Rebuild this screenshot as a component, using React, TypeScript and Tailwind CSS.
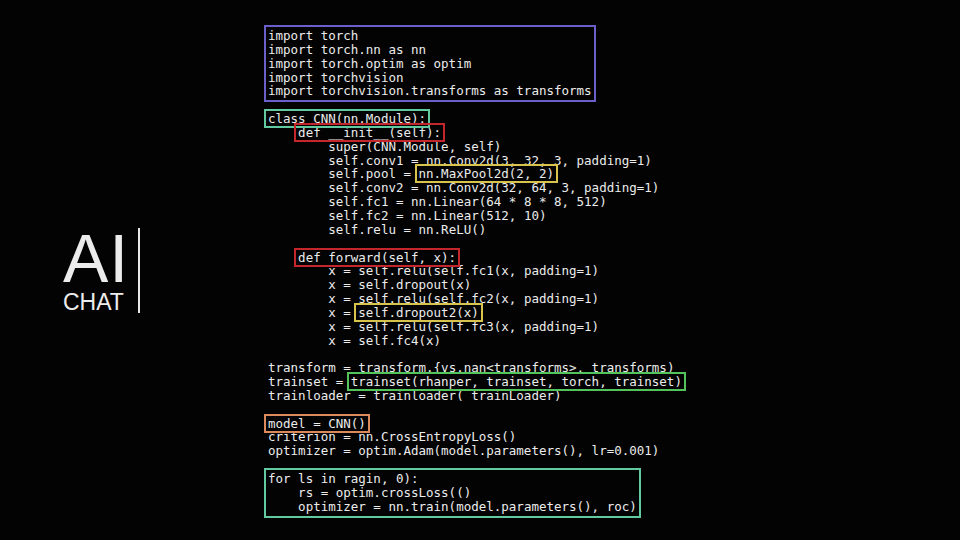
import type { ReactNode } from "react";

function Line({ indent = 0, children }: { indent?: number; children?: ReactNode }) {
  return (
    <div className="h-[13.85px] whitespace-pre">
      {" ".repeat(indent)}
      {children}
    </div>
  );
}

function Mark({ color, children }: { color: string; children: ReactNode }) {
  return (
    <span className={`-mx-[2px] px-[2px] outline-2 outline-offset-0 ${color}`}>{children}</span>
  );
}

function Blank() {
  return <div className="h-[13.85px]" />;
}

export default function App() {
  return (
    <div className="flex h-[540px] w-[960px] overflow-hidden bg-[#030303] text-[#ececec]">
      <div className="flex w-[268px] shrink-0 items-center pl-[63px]">
        <div className="flex items-stretch gap-[9px] font-['Liberation_Sans',Arial,sans-serif]">
          <div className="flex flex-col">
            <span className="text-[68px] leading-[60px] tracking-[1px]">AI</span>
            <span className="mt-[3px] text-[23px] leading-[22px]">CHAT</span>
          </div>
          <div className="w-[2px] bg-[#e8e8e8]" />
        </div>
      </div>

      <div className="pt-[29px] font-['DejaVu_Sans_Mono',monospace] text-[12.5px] leading-[13.85px]">
        <div className="w-fit outline-2 outline-offset-2 outline-[#6b5fc9]">
          <Line>import torch</Line>
          <Line>import torch.nn as nn</Line>
          <Line>import torch.optim as optim</Line>
          <Line>import torchvision</Line>
          <Line>import torchvision.transforms as transforms</Line>
        </div>
        <Blank />
        <Line>
          <Mark color="outline-[#62c9a0]">class CNN(nn.Module):</Mark>
        </Line>
        <Line indent={4}>
          <Mark color="outline-[#c4262b]">def __init__(self):</Mark>
        </Line>
        <Line indent={8}>super(CNN.Module, self)</Line>
        <Line indent={8}>self.conv1 = nn.Conv2d(3, 32, 3, padding=1)</Line>
        <Line indent={8}>
          self.pool = <Mark color="outline-[#d8c44c]">nn.MaxPool2d(2, 2)</Mark>
        </Line>
        <Line indent={8}>self.conv2 = nn.Conv2d(32, 64, 3, padding=1)</Line>
        <Line indent={8}>self.fc1 = nn.Linear(64 * 8 * 8, 512)</Line>
        <Line indent={8}>self.fc2 = nn.Linear(512, 10)</Line>
        <Line indent={8}>self.relu = nn.ReLU()</Line>
        <Blank />
        <Line indent={4}>
          <Mark color="outline-[#c4262b]">def forward(self, x):</Mark>
        </Line>
        <Line indent={8}>x = self.relu(self.fc1(x, padding=1)</Line>
        <Line indent={8}>x = self.dropout(x)</Line>
        <Line indent={8}>x = self.relu(self.fc2(x, padding=1)</Line>
        <Line indent={8}>
          x = <Mark color="outline-[#d8c44c]">self.dropout2(x)</Mark>
        </Line>
        <Line indent={8}>x = self.relu(self.fc3(x, padding=1)</Line>
        <Line indent={8}>x = self.fc4(x)</Line>
        <Blank />
        <Line>transform = transform.{"{"}vs.nan&lt;transforms&gt;, transforms)</Line>
        <Line>
          trainset = <Mark color="outline-[#52c45a]">trainset(rhanper, trainset, torch, trainset)</Mark>
        </Line>
        <Line>trainloader = trainloader( trainLoader)</Line>
        <Blank />
        <Line>
          <Mark color="outline-[#dc8a5c]">model = CNN()</Mark>
        </Line>
        <Line>criterion = nn.CrossEntropyLoss()</Line>
        <Line>optimizer = optim.Adam(model.parameters(), lr=0.001)</Line>
        <Blank />
        <div className="w-fit outline-2 outline-offset-2 outline-[#62c9a0]">
          <Line>for ls in ragin, 0):</Line>
          <Line indent={4}>rs = optim.crossLoss(()</Line>
          <Line indent={4}>optimizer = nn.train(model.parameters(), roc)</Line>
        </div>
      </div>
    </div>
  );
}
